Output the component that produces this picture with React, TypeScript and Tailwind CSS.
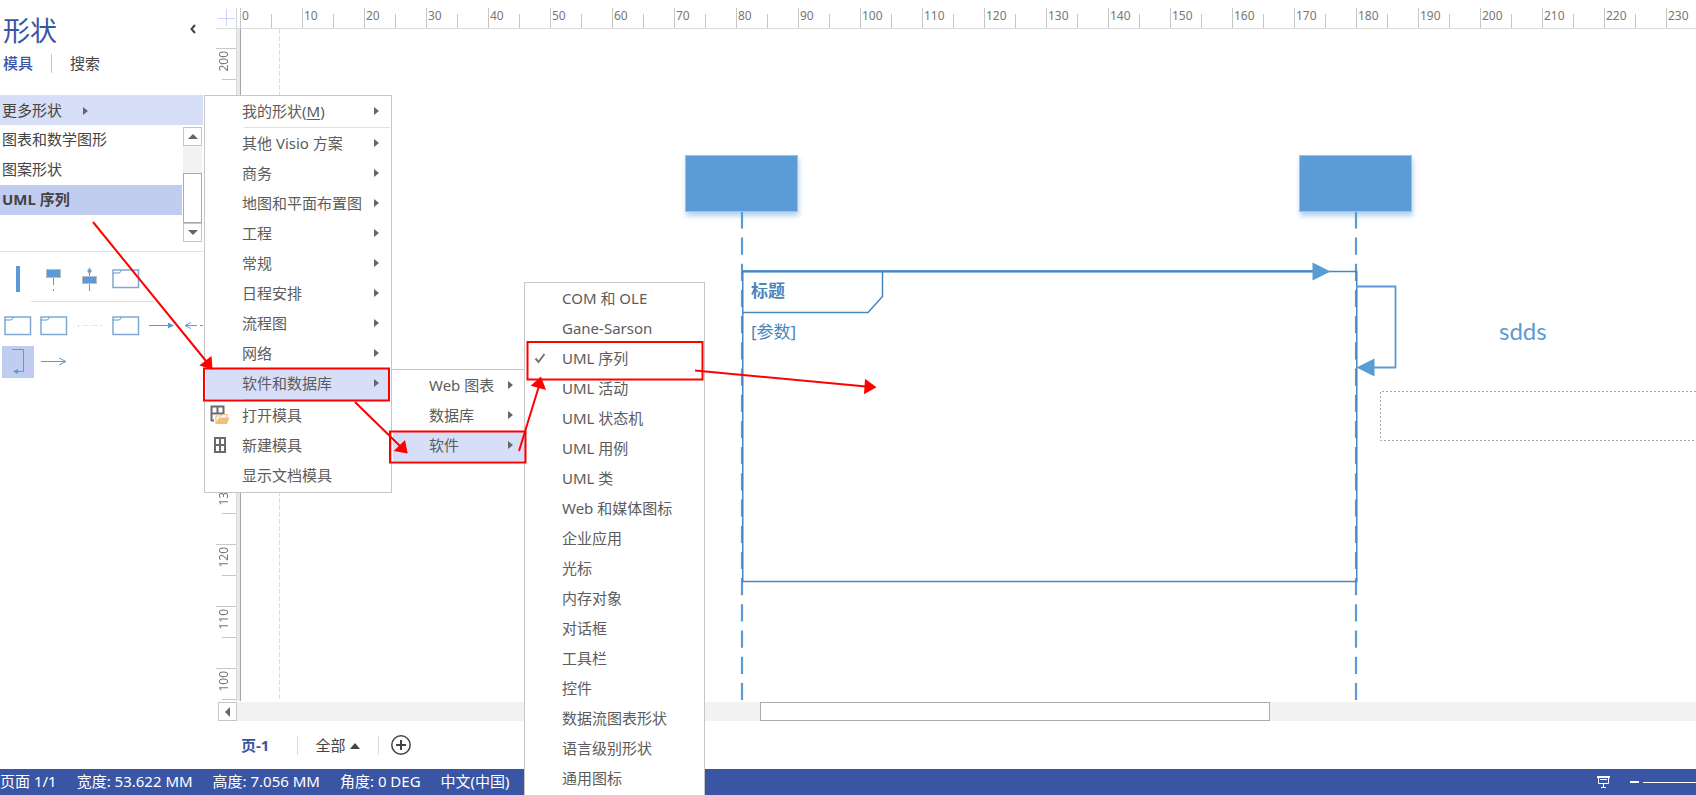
import React from "react";

type Entry = {
  label: React.ReactNode;
  sub?: boolean;
  active?: boolean;
  checked?: boolean;
  icon?: React.ReactNode;
  ruleAfter?: boolean;
};

const OpenStencilIcon = () => (
  <svg width="20" height="20" viewBox="0 0 20 20" aria-hidden="true">
    <path d="M1.500 16V1.500h12V9M1.500 8.500h12M7.500 1v8M1 15.500h3" fill="none" stroke="#6a6a6a" strokeWidth="2" />
    <path d="M6 18.500V11h5l1.500-1.500H17v3" fill="#fff" stroke="#e9bf7a" strokeWidth="1.200" />
    <path d="M5.500 19l3.500-6.500h10.500L17 19z" fill="#ecc17e" />
  </svg>
);

const NewStencilIcon = () => (
  <svg width="14" height="18" viewBox="0 0 14 18" aria-hidden="true">
    <path d="M2 2h10v14H2zM2 9h10M7 2v14" fill="none" stroke="#6a6a6a" strokeWidth="2" />
  </svg>
);

const CheckIcon = () => (
  <svg width="12" height="12" viewBox="0 0 12 12" aria-hidden="true">
    <path d="M1.500 6.500l3 3.500L10.500 2" fill="none" stroke="#777" strokeWidth="2" />
  </svg>
);

const RightTriangle = () => (
  <svg width="5" height="8" viewBox="0 0 5 8" className="shrink-0" aria-hidden="true">
    <path d="M0 0l5 4-5 4z" fill="#666" />
  </svg>
);

const mainMenu: Entry[] = [
  { label: <>我的形状(<span className="underline underline-offset-2">M</span>)</>, sub: true, ruleAfter: true },
  { label: "其他 Visio 方案", sub: true },
  { label: "商务", sub: true },
  { label: "地图和平面布置图", sub: true },
  { label: "工程", sub: true },
  { label: "常规", sub: true },
  { label: "日程安排", sub: true },
  { label: "流程图", sub: true },
  { label: "网络", sub: true },
  { label: "软件和数据库", sub: true, active: true, ruleAfter: true },
  { label: "打开模具", icon: <OpenStencilIcon /> },
  { label: "新建模具", icon: <NewStencilIcon /> },
  { label: "显示文档模具" },
];

const databaseMenu: Entry[] = [
  { label: "Web 图表", sub: true },
  { label: "数据库", sub: true },
  { label: "软件", sub: true, active: true },
];

const softwareMenu: Entry[] = [
  { label: "COM 和 OLE" },
  { label: "Gane-Sarson" },
  { label: "UML 序列", checked: true },
  { label: "UML 活动" },
  { label: "UML 状态机" },
  { label: "UML 用例" },
  { label: "UML 类" },
  { label: "Web 和媒体图标" },
  { label: "企业应用" },
  { label: "光标" },
  { label: "内存对象" },
  { label: "对话框" },
  { label: "工具栏" },
  { label: "控件" },
  { label: "数据流图表形状" },
  { label: "语言级别形状" },
  { label: "通用图标" },
];

function Menu({ entries, className, label }: { entries: Entry[]; className: string; label: string }) {
  return (
    <div role="menu" aria-label={label} className={`absolute border border-[#c6c6c6] bg-white p-px text-[#5c5c5c] ${className}`}>
      {entries.map((e, i) => (
        <React.Fragment key={i}>
          <button
            role="menuitem"
            className={`flex h-[30px] w-full items-center pr-[11px] pb-[2px] text-left whitespace-nowrap ${e.active ? "bg-[#d6dff7]" : ""}`}
          >
            <span className="flex w-[36px] shrink-0 justify-center pr-2">
              {e.icon}
              {e.checked && <CheckIcon />}
            </span>
            <span className="flex-1">{e.label}</span>
            {e.sub && <RightTriangle />}
          </button>
          {e.ruleAfter && <div className="ml-[38px] h-[2px] border-t border-[#e1e1e1]" />}
        </React.Fragment>
      ))}
    </div>
  );
}

const FrameShape = () => (
  <svg width="28" height="20" viewBox="0 0 28 20" aria-hidden="true">
    <rect x="1" y="1" width="25.500" height="17.500" fill="none" stroke="#7fa9d3" strokeWidth="1.500" />
    <path d="M1 4h6l2-1.500V1" fill="none" stroke="#5b9bd5" />
  </svg>
);

const shapesTop = [
  <svg key="a" width="28" height="28" viewBox="0 0 28 28"><rect x="12" y="1" width="4" height="26" fill="#5b9bd5" /></svg>,
  <svg key="b" width="28" height="28" viewBox="0 0 28 28">
    <rect x="6.500" y="4.500" width="14" height="8" fill="#5b9bd5" stroke="#bdbdbd" />
    <path d="M13.500 13v7M13.500 24v2" stroke="#5b9bd5" />
  </svg>,
  <svg key="c" width="28" height="28" viewBox="0 0 28 28">
    <path d="M13.500 2l2.500 4-2.500 4-2.500-4z" fill="#b4bcc6" />
    <circle cx="13.500" cy="6" r="1.500" fill="#5b9bd5" />
    <path d="M13.500 8v4M13.500 19v7" stroke="#5b9bd5" />
    <rect x="6.500" y="11.500" width="14" height="7" fill="#5b9bd5" stroke="#bdbdbd" />
  </svg>,
  <FrameShape key="d" />,
];

const shapesBottom = [
  <FrameShape key="a" />,
  <FrameShape key="b" />,
  <svg key="c" width="28" height="20" viewBox="0 0 28 20">
    <path d="M2 10h1" stroke="#9aa6c0" />
    <path d="M6 9.500h20" stroke="#dfe6f5" strokeDasharray="7 2" />
  </svg>,
  <FrameShape key="d" />,
  <svg key="e" width="28" height="20" viewBox="0 0 28 20">
    <path d="M1 9.500h20" stroke="#5b9bd5" />
    <path d="M20 6.500l6 3-6 3z" fill="#5b9bd5" />
  </svg>,
  <svg key="f" width="28" height="20" viewBox="0 0 28 20">
    <path d="M1 9.500h12M16 9.500h6M7 6.500l-6 3 6 3" fill="none" stroke="#5b9bd5" />
  </svg>,
  <svg key="g" width="28" height="28" viewBox="0 0 28 28">
    <path d="M8 1.500h11.500v22H12" fill="none" stroke="#5b9bd5" />
    <path d="M14 21l-5 2.500 5 2.500z" fill="#5b9bd5" />
  </svg>,
  <svg key="h" width="28" height="20" viewBox="0 0 28 20">
    <path d="M1 9.500h25M19 6l7 3.500-7 3.500" fill="none" stroke="#5b9bd5" />
  </svg>,
];

function Sidebar() {
  return (
    <aside className="flex w-[203px] shrink-0 flex-col overflow-hidden text-[#444]">
      <div className="flex h-[53px] items-center justify-between pt-2 pr-[7px] pl-[3px]">
        <h1 className="text-[27px] leading-none text-[#3955a3]">形状</h1>
        <button aria-label="折叠" className="mb-2">
          <svg width="6" height="10" viewBox="0 0 6 10" className="mt-1">
            <path d="M5 1L1.500 5 5 9" fill="none" stroke="#444" strokeWidth="2" />
          </svg>
        </button>
      </div>
      <div className="flex h-[20px] items-center pl-[3px]">
        <button className="font-medium text-[#3955a3]">模具</button>
        <span className="ml-[18px] h-[19px] w-px bg-[#c6c6c6]" />
        <button className="ml-[18px]">搜索</button>
      </div>
      <button className="mt-[22px] flex h-[30px] shrink-0 items-center gap-[21px] bg-[#d6dff7] pl-[2px]">
        更多形状
        <span className="pt-[2px]"><RightTriangle /></span>
      </button>
      <div className="flex h-[127px] shrink-0 border-b border-[#e1e1e1]">
        <div className="flex w-[182px] flex-col">
          <button className="h-[30px] pb-[2px] pl-[2px] text-left">图表和数学图形</button>
          <button className="h-[30px] pb-[2px] pl-[2px] text-left">图案形状</button>
          <button className="h-[30px] bg-[#c1ccf1] pb-[2px] pl-[2px] text-left font-bold">UML 序列</button>
        </div>
        <div className="mt-[2px] ml-px flex h-[115px] w-[19px] flex-col bg-[#f2f2f2]">
          <button aria-label="向上" className="flex h-[19px] items-center justify-center border border-[#c6c6c6] bg-white">
            <svg width="10" height="5" viewBox="0 0 10 5"><path d="M0 5l5-5 5 5z" fill="#666" /></svg>
          </button>
          <div className="mt-[27px] flex-1 border border-[#ababab] bg-white" />
          <button aria-label="向下" className="flex h-[19px] items-center justify-center border border-[#c6c6c6] bg-white">
            <svg width="10" height="5" viewBox="0 0 10 5"><path d="M0 0l5 5 5-5z" fill="#666" /></svg>
          </button>
        </div>
      </div>
      <div className="flex gap-1 pt-[11px] pl-[2px]">
        {shapesTop.map((s, i) => (
          <button key={i} aria-label="形状" className="flex size-8 shrink-0 items-center justify-center">{s}</button>
        ))}
      </div>
      <div className="mt-[6px] mr-[49px] mb-2 ml-[31px] h-px shrink-0 bg-[#dcdcdc]" />
      <div className="grid w-[214px] grid-cols-6 gap-1 pl-[2px]">
        {shapesBottom.map((s, i) => (
          <button key={i} aria-label="形状" className={`flex size-8 items-center justify-center ${i === 6 ? "bg-[#c1ccf1]" : ""}`}>{s}</button>
        ))}
      </div>
    </aside>
  );
}

const columns = Array.from({ length: 24 }, (_, i) => i * 10);
const rows = Array.from({ length: 11 }, (_, i) => 200 - i * 10);

function Diagram() {
  return (
    <svg width="1455" height="672" viewBox="241 29 1455 672" className="absolute top-0 left-0" fill="none">
      <defs>
        <filter id="soft" x="-10%" y="-10%" width="120%" height="140%">
          <feDropShadow dx="1" dy="4" stdDeviation="2.500" floodColor="#5b9bd5" floodOpacity="0.450" />
        </filter>
      </defs>
      <path d="M279.500 29v672" stroke="#dcdcdc" strokeDasharray="5 2" />
      <g stroke="#5b9bd5" strokeWidth="2.200" strokeDasharray="17.200 9">
        <path d="M742 211.300V701" />
        <path d="M1356 211.300V701" />
      </g>
      <g fill="#5b9bd5" stroke="#b4bcc6" filter="url(#soft)">
        <rect x="685.500" y="155.500" width="112" height="56" />
        <rect x="1299.500" y="155.500" width="112" height="56" />
      </g>
      <path d="M742 271.300h571" stroke="#5b9bd5" strokeWidth="2.400" />
      <g stroke="#4a86be" strokeWidth="1.500">
        <rect x="742.750" y="271.500" width="614" height="310" />
        <path d="M742.500 312.500h125.500l14.500-16v-25" />
      </g>
      <path d="M1312.500 262.500v18l18-9z" fill="#5b9bd5" />
      <path d="M1356 286.500h39.500v81H1374" stroke="#5b9bd5" strokeWidth="1.800" />
      <path d="M1374.500 358.500v18l-18-9z" fill="#5b9bd5" />
      <path d="M1720 391.500H1380.500v49H1720" stroke="#a8a8a8" strokeDasharray="2 2" />
    </svg>
  );
}

function Workspace() {
  return (
    <main className="flex min-w-0 flex-1 flex-col overflow-hidden pl-[13px]">
      <div className="flex h-[29px] shrink-0 overflow-hidden border-b border-[#dcdcdc] pt-2 text-xs text-[#777]">
        <div className="flex w-[20px] shrink-0 justify-center">
          <svg width="18" height="18" viewBox="0 0 18 18"><path d="M9.500 1v17M1 10.500h17" stroke="#cdd2fa" /></svg>
        </div>
        <div className="w-1 shrink-0 border-l border-[#d4d4d4]" />
        {columns.map((n) => (
          <div key={n} className="flex w-[62px] shrink-0 items-end border-l border-[#c6c6c6]">
            <span className="h-full w-[30px] pl-px leading-4">{n}</span>
            <span className="h-[14px] w-px bg-[#c6c6c6]" />
          </div>
        ))}
      </div>
      <div className="flex min-h-0 flex-1">
        <div className="w-[20px] shrink-0 overflow-hidden pt-[19px] text-xs text-[#777]">
          {rows.map((n) => (
            <div key={n} className="flex h-[62px] flex-col border-t border-[#c6c6c6]">
              <div className="h-[30px]">
                <span className="rotate-180 pb-[2px] leading-4 [writing-mode:vertical-rl]">{n}</span>
              </div>
              <span className="ml-[6px] h-px bg-[#c6c6c6]" />
            </div>
          ))}
        </div>
        <div className="w-1 shrink-0 border-l border-[#dcdcdc] bg-[#e6e8ec]" />
        <div className="relative flex-1 overflow-hidden border-l border-[#a0a5ae]">
          <Diagram />
          <span className="absolute top-[249px] left-[510px] text-[17px] font-bold text-[#4a86be]">标题</span>
          <span className="absolute top-[290px] left-[510px] text-[17px] text-[#4a86be]">[参数]</span>
          <span className="absolute top-[286px] left-[1258px] font-['Lato','Noto_Sans_CJK_SC',sans-serif] text-2xl text-[#5b9bd5]">sdds</span>
        </div>
      </div>
      <div className="mt-px ml-[2px] flex h-[19px] shrink-0 bg-[#f2f2f2]">
        <button aria-label="向左" className="flex w-[19px] items-center justify-center border border-[#c6c6c6] bg-white">
          <svg width="5" height="10" viewBox="0 0 5 10"><path d="M5 0L0 5l5 5z" fill="#666" /></svg>
        </button>
        <div className="ml-[523px] w-[510px] border border-[#ababab] bg-white" />
      </div>
      <div className="flex h-12 shrink-0 items-center pl-[25px] text-[#444]">
        <button className="font-bold text-[#3955a3]">页-1</button>
        <span className="ml-7 h-[19px] w-px bg-[#dcdcdc]" />
        <button className="ml-[17px] flex items-center gap-[5px]">
          全部
          <svg width="10" height="6" viewBox="0 0 10 6" className="mt-px"><path d="M0 6l5-6 5 6z" fill="#444" /></svg>
        </button>
        <span className="ml-[18px] h-[19px] w-px bg-[#dcdcdc]" />
        <button aria-label="插入页" className="ml-3">
          <svg width="20" height="20" viewBox="0 0 20 20" fill="none" stroke="#444">
            <circle cx="10" cy="10" r="9.200" strokeWidth="1.500" />
            <path d="M10 5v10M5 10h10" strokeWidth="2" />
          </svg>
        </button>
      </div>
    </main>
  );
}

function StatusBar() {
  return (
    <footer className="flex h-[26px] shrink-0 items-center overflow-hidden bg-[#3955a3] whitespace-nowrap text-white">
      <div className="flex flex-1 gap-5 pb-[2px]">
        <span>页面 1/1</span>
        <span>宽度: 53.622 MM</span>
        <span>高度: 7.056 MM</span>
        <span>角度: 0 DEG</span>
        <span>中文(中国)</span>
      </div>
      <button aria-label="演示模式">
        <svg width="13" height="12" viewBox="0 0 13 12" fill="none" stroke="#fff">
          <path d="M0 1h13" strokeWidth="2" />
          <path d="M1.500 2v5.500h10V2M3 3.500h7M6.500 7.500v4M4 11.500h5" />
        </svg>
      </button>
      <button aria-label="缩小" className="ml-5 h-[2px] w-[9px] bg-white" />
      <input
        type="range"
        aria-label="缩放"
        defaultValue={50}
        className="mr-[-147px] ml-1 h-px w-[200px] shrink-0 appearance-none bg-white"
      />
    </footer>
  );
}

function Callouts() {
  return (
    <svg width="900" height="480" viewBox="0 0 900 480" className="pointer-events-none absolute top-0 left-0" fill="none" stroke="#f00" strokeWidth="2" aria-hidden="true">
      <rect x="204" y="368.500" width="185" height="32" />
      <rect x="390" y="431.500" width="135.500" height="31" />
      <rect x="527.500" y="342" width="175" height="37.500" />
      <path d="M93 222L206 361M355 402l46 45M519 451l20-65M695 370.500l171 16" />
      <g fill="#f00" stroke="none">
        <path d="M212.500 369.500l-1-13.500-12.200 9.500z" />
        <path d="M407.700 453.500L405 440l-11.300 11z" />
        <path d="M541 376.500l-10.300 9.200 15.300 4.300z" />
        <path d="M876.500 387.300L865 378.700l-1 15.600z" />
      </g>
    </svg>
  );
}

export default function App() {
  return (
    <div className="relative flex h-screen flex-col overflow-hidden bg-white font-['Noto_Sans','Noto_Sans_CJK_SC',sans-serif] text-[15px] leading-normal">
      <div className="flex min-h-0 flex-1">
        <Sidebar />
        <Workspace />
      </div>
      <StatusBar />
      <Menu label="更多形状" entries={mainMenu} className="top-[95px] left-[204px] w-[188px]" />
      <Menu label="软件和数据库" entries={databaseMenu} className="top-[369px] left-[391px] w-[135px]" />
      <Menu label="软件" entries={softwareMenu} className="top-[282px] left-[524px] w-[181px]" />
      <Callouts />
    </div>
  );
}
